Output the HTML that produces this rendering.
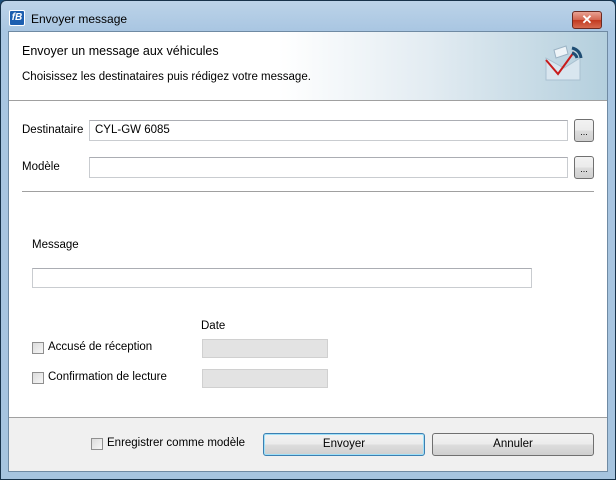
<!DOCTYPE html>
<html><head><meta charset="utf-8"><style>
*{margin:0;padding:0;box-sizing:border-box}
body{width:616px;height:480px;overflow:hidden;background:#1d4f7a;font-family:"Liberation Sans",sans-serif;font-size:11.5px;color:#000;position:relative}
.a{position:absolute}
.frame{left:0;top:0;width:616px;height:480px;border:1px solid #17324a;border-radius:6px 6px 0 0;background:linear-gradient(#bcd3e8,#a9c6e2 30px,#a6c4df 100%)}
.client{left:8px;top:31px;width:600px;height:441px;background:#fff;border:1px solid #6f8aa3}
.inp{border:1px solid #c9ccd0;border-top-color:#abadb3;background:#fff}
.btn{border:1px solid #707070;border-radius:3px;background:linear-gradient(#f2f2f2,#ebebeb 50%,#dddddd 51%,#cfcfcf);text-align:center}
.cb{width:12px;height:12px;border:1px solid #8f8f8f;background:linear-gradient(135deg,#dcdcdc,#f6f6f6)}
.dis{background:#e3e3e3;border:1px solid #d0d0d0}
</style></head><body>
<div class="a frame"></div>
<div class="a" style="left:9px;top:10px;width:16px;height:16px;background:#1d5fb0;border:1px solid #fff;border-radius:2px;color:#fff;font-weight:bold;font-style:italic;font-size:10px;line-height:14px;text-align:center">fB</div>
<div class="a" style="left:31px;top:12px;font-size:12px;color:#000">Envoyer message</div>
<div class="a" style="left:572px;top:11px;width:30px;height:18px;border:1px solid #6b2a22;border-radius:3px;background:linear-gradient(#e8a293,#d3644f 50%,#c2391f 51%,#d66a4f);color:#fff;font-weight:bold;font-size:13px;text-align:center;line-height:16px">✕</div>
<div class="a client"></div>
<div class="a" style="left:9px;top:32px;width:598px;height:69px;background:linear-gradient(90deg,#fff 0,#fff 45%,#e3ecf2 70%,#b4cfdd 100%);border-bottom:1px solid #a0a0a0"></div>
<div class="a" style="left:22px;top:44px;font-size:12.5px">Envoyer un message aux véhicules</div>
<div class="a" style="left:22px;top:71px">Choisissez les destinataires puis rédigez votre message.</div>
<svg class="a" style="left:544px;top:44px" width="40" height="46" viewBox="0 0 40 46"><path d="M2 14 L20 24 L36 14 L36 36 L2 36Z" fill="#d9e6ef" stroke="#a9c0d0"/><path d="M2 16 L14 30 L30 8" fill="none" stroke="#c81c1c" stroke-width="2"/><path d="M10 6 L22 2 L24 10 L12 14Z" fill="#eef4f8" stroke="#9cb3c4"/><path d="M28 4 Q36 6 37 14" stroke="#1f4d73" stroke-width="3" fill="none"/><path d="M28 9 Q32 10 33 14" stroke="#1f4d73" stroke-width="3" fill="none"/></svg>
<div class="a" style="left:22px;top:124px">Destinataire</div>
<div class="a inp" style="left:89px;top:120px;width:479px;height:21px;padding:3px 5px">CYL-GW 6085</div>
<div class="a btn" style="left:574px;top:119px;width:20px;height:23px;line-height:24px;font-size:9px">...</div>
<div class="a" style="left:22px;top:161px">Modèle</div>
<div class="a inp" style="left:89px;top:157px;width:479px;height:21px"></div>
<div class="a btn" style="left:574px;top:156px;width:20px;height:23px;line-height:24px;font-size:9px">...</div>
<div class="a" style="left:22px;top:191px;width:572px;height:1px;background:#a0a0a0"></div>
<div class="a" style="left:32px;top:239px">Message</div>
<div class="a inp" style="left:32px;top:268px;width:500px;height:20px"></div>
<div class="a" style="left:201px;top:320px">Date</div>
<div class="a cb" style="left:32px;top:342px"></div>
<div class="a" style="left:48px;top:341px">Accusé de réception</div>
<div class="a dis" style="left:202px;top:339px;width:126px;height:19px"></div>
<div class="a cb" style="left:32px;top:372px"></div>
<div class="a" style="left:48px;top:371px">Confirmation de lecture</div>
<div class="a dis" style="left:202px;top:369px;width:126px;height:19px"></div>
<div class="a" style="left:9px;top:417px;width:598px;height:54px;background:#f0f0f0;border-top:1px solid #a0a0a0"></div>
<div class="a cb" style="left:91px;top:438px"></div>
<div class="a" style="left:107px;top:437px">Enregistrer comme modèle</div>
<div class="a btn" style="left:263px;top:433px;width:162px;height:23px;line-height:21px;border-color:#3c7fb1;box-shadow:inset 0 0 0 1px #9fe0f8">Envoyer</div>
<div class="a btn" style="left:432px;top:433px;width:162px;height:23px;line-height:21px">Annuler</div>
</body></html>
